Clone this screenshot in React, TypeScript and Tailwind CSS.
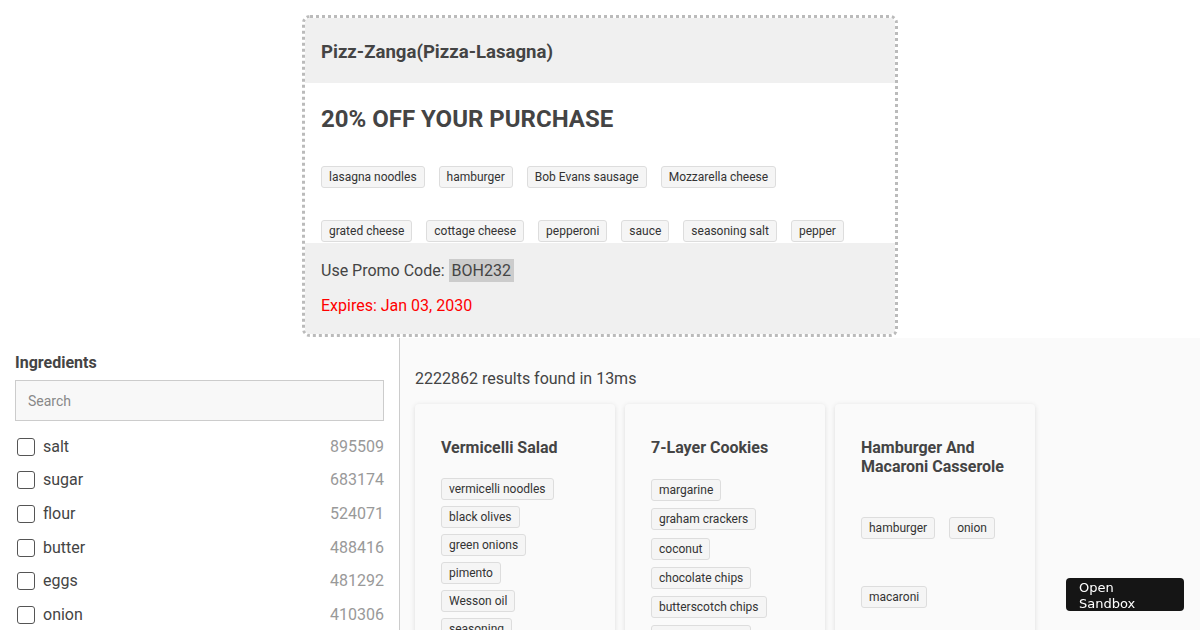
import React from 'react';

const couponTags = [
  'lasagna noodles',
  'hamburger',
  'Bob Evans sausage',
  'Mozzarella cheese',
  'grated cheese',
  'cottage cheese',
  'pepperoni',
  'sauce',
  'seasoning salt',
  'pepper',
];

const ingredients = [
  { name: 'salt', count: 895509 },
  { name: 'sugar', count: 683174 },
  { name: 'flour', count: 524071 },
  { name: 'butter', count: 488416 },
  { name: 'eggs', count: 481292 },
  { name: 'onion', count: 410306 },
  { name: 'garlic', count: 382117 },
];

const recipes = [
  {
    title: 'Vermicelli Salad',
    tagBox: 'mt-[21px] flex flex-col items-start gap-[6px]',
    tags: ['vermicelli noodles', 'black olives', 'green onions', 'pimento', 'Wesson oil', 'seasoning'],
  },
  {
    title: '7-Layer Cookies',
    tagBox: 'mt-[22px] flex flex-col items-start gap-[7.3px]',
    tags: ['margarine', 'graham crackers', 'coconut', 'chocolate chips', 'butterscotch chips', 'condensed milk'],
  },
  {
    title: 'Hamburger And Macaroni Casserole',
    tagBox: 'mt-[41px] flex flex-wrap items-start gap-x-[14px] gap-y-[47px]',
    tags: ['hamburger', 'onion', 'macaroni'],
  },
];

const Tag: React.FC<{ label: string }> = ({ label }) => (
  <span className="inline-block h-[22px] px-[7px] text-[12px] leading-[20px] text-[#333] border border-[#dddddd] rounded-[3px] bg-[#f5f5f5] whitespace-nowrap">
    {label}
  </span>
);

export default function App() {
  return (
    <div className="min-h-screen bg-white font-['Roboto',sans-serif] text-[#444]">
      {/* coupon */}
      <div className="flex justify-center pt-[15px]">
        <div className="w-[596px] border-[3px] border-dotted border-[#bbbbbb] rounded-[8px] overflow-hidden">
          <div className="h-[65px] bg-[#f0f0f0] px-4 pt-[4px] flex items-center text-[18.6px] font-bold">
            Pizz-Zanga(Pizza-Lasagna)
          </div>
          <div className="h-[160px] overflow-hidden px-4 pt-[22px] bg-white">
            <h2 className="text-[24px] leading-[28px] font-bold">20% OFF YOUR PURCHASE</h2>
            <div className="mt-[33px] flex flex-wrap gap-x-[14px] gap-y-[32px]">
              {couponTags.map((t) => (
                <Tag key={t} label={t} />
              ))}
            </div>
          </div>
          <div className="bg-[#f0f0f0] px-4 pt-[16px] pb-[16px] text-[16px]">
            <div className="leading-[24px]">
              Use Promo Code: <span className="bg-[#cccccc] px-[3px] py-[2px]">BOH232</span>
            </div>
            <div className="mt-[11px] leading-[24px] text-[#ff0000]">Expires: Jan 03, 2030</div>
          </div>
        </div>
      </div>

      {/* main */}
      <div className="flex mt-[1px]">
        <aside className="w-[400px] shrink-0 border-r border-[#cccccc] px-[15px] pt-[15px]">
          <div className="text-[16px] leading-[20px] font-bold">Ingredients</div>
          <div className="mt-[7px] h-[41px] border border-[#cccccc] bg-[#f8f8f8] px-3 pt-[2px] flex items-center text-[14px] text-[#888]">
            Search
          </div>
          <div className="mt-[9px]">
            {ingredients.map((i) => (
              <div key={i.name} className="h-[33.6px] flex items-center text-[16px]">
                <span className="ml-[2px] w-[18px] h-[18px] border border-[#555] rounded-[3px] bg-white" />
                <span className="ml-2 flex-1">{i.name}</span>
                <span className="text-[#999]">{i.count}</span>
              </div>
            ))}
          </div>
        </aside>

        <main className="flex-1 bg-[#fafafa] px-[15px] pt-[29px] h-[330px] overflow-hidden">
          <div className="text-[16px] leading-[24px]">2222862 results found in 13ms</div>
          <div className="mt-[13px] flex gap-[10px]">
            {recipes.map((r) => (
              <div
                key={r.title}
                className="w-[200px] h-[300px] bg-[#fafafa] rounded-[4px] shadow-[0_1px_5px_rgba(0,0,0,0.12)] px-[26px] pt-[34px]"
              >
                <div className="text-[16px] leading-[19px] font-bold">{r.title}</div>
                <div className={r.tagBox}>
                  {r.tags.map((t) => (
                    <Tag key={t} label={t} />
                  ))}
                </div>
              </div>
            ))}
          </div>
        </main>
      </div>

      <button className="fixed right-[16px] bottom-[19px] w-[118px] h-[33px] bg-[#151515] rounded-[4px] text-white text-[13px] leading-[16px] pl-[13px] pt-[2px] text-left font-['DejaVu_Sans',sans-serif]">
        <span className="block w-[70px]">Open Sandbox</span>
      </button>
    </div>
  );
}
